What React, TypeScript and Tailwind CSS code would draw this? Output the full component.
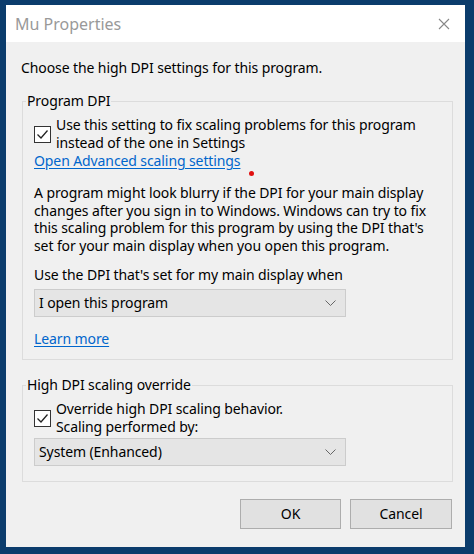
import React from "react";

const font = { fontFamily: '"Noto Sans", "Segoe UI", Arial, sans-serif' };

function CheckBox() {
  return (
    <div className="w-[17px] h-[17px] border border-[#333333] bg-white flex items-center justify-center shrink-0">
      <svg width="13" height="11" viewBox="0 0 13 11">
        <path d="M1.5 5.5 L5 9 L11.5 1.5" fill="none" stroke="#222" strokeWidth="1.3" />
      </svg>
    </div>
  );
}

function Dropdown({ label }: { label: string }) {
  return (
    <div className="w-[312px] h-[28px] bg-[#e5e5e5] border border-[#cccccc] flex items-center justify-between pl-[4px] pr-[9px]">
      <span>{label}</span>
      <svg width="11" height="7" viewBox="0 0 11 7">
        <path d="M0.5 0.5 L5.5 5.5 L10.5 0.5" fill="none" stroke="#666" strokeWidth="1" />
      </svg>
    </div>
  );
}

export default function App() {
  return (
    <div
      className="w-[474px] h-[554px] bg-[#0b3c6c] pt-[5px] pl-[6px] pr-[9px] pb-[7px] text-[14px] tracking-[-0.1px] leading-[18px] text-[#000]"
      style={font}
    >
      <div className="w-full h-full flex flex-col overflow-hidden">
        <div className="h-[37px] bg-white flex items-center justify-between pl-[9px] pr-[15px] shrink-0">
          <span className="text-[16px] tracking-normal text-[#999999]">Mu Properties</span>
          <svg width="12" height="12" viewBox="0 0 12 12">
            <path d="M1 1 L11 11 M11 1 L1 11" stroke="#888" strokeWidth="1.1" />
          </svg>
        </div>
        <div className="flex-1 bg-[#f0f0f0] flex flex-col pl-[16px] pr-[12px] pt-[17px]">
          <div className="-ml-[1px]">Choose the high DPI settings for this program.</div>

          <fieldset className="mt-[15px] border border-[#dcdcdc] pl-[11px] pr-[8px] pb-[11px] relative">
            <legend className="-ml-[8px] px-[1px]">Program DPI</legend>
            <div className="flex items-center gap-[5px] mt-[6px]">
              <CheckBox />
              <div>
                Use this setting to fix scaling problems for this program
                <br />
                instead of the one in Settings
              </div>
            </div>
            <div>
              <span className="text-[#0066cc] underline underline-offset-2">Open Advanced scaling settings</span>
            </div>
            <div className="absolute left-[226px] top-[61px] w-[5px] h-[5px] rounded-full bg-[#e01010]" />
            <p className="mt-[14px] leading-[17.5px]">
              A program might look blurry if the DPI for your main display changes after you sign in to Windows. Windows can try to fix this scaling problem for this program by using the DPI that's set for your main display when you open this program.
            </p>
            <div className="mt-[12px]">Use the DPI that's set for my main display when</div>
            <div className="mt-[5px]">
              <Dropdown label="I open this program" />
            </div>
            <div className="mt-[13px]">
              <span className="text-[#0066cc] underline underline-offset-2">Learn more</span>
            </div>
          </fieldset>

          <fieldset className="mt-[16px] border border-[#dcdcdc] pl-[11px] pr-[8px] pb-[15px]">
            <legend className="-ml-[8px] px-[1px]">High DPI scaling override</legend>
            <div className="flex items-center gap-[5px] mt-[6px]">
              <CheckBox />
              <div>
                Override high DPI scaling behavior.
                <br />
                Scaling performed by:
              </div>
            </div>
            <div className="mt-[2px]">
              <Dropdown label="System (Enhanced)" />
            </div>
          </fieldset>

          <div className="flex justify-end gap-[9px] mt-[17px] mr-[1px]">
            <div className="w-[101px] h-[30px] bg-[#e1e1e1] border border-[#adadad] flex items-center justify-center">OK</div>
            <div className="w-[102px] h-[30px] bg-[#e1e1e1] border border-[#adadad] flex items-center justify-center">Cancel</div>
          </div>
        </div>
      </div>
    </div>
  );
}
